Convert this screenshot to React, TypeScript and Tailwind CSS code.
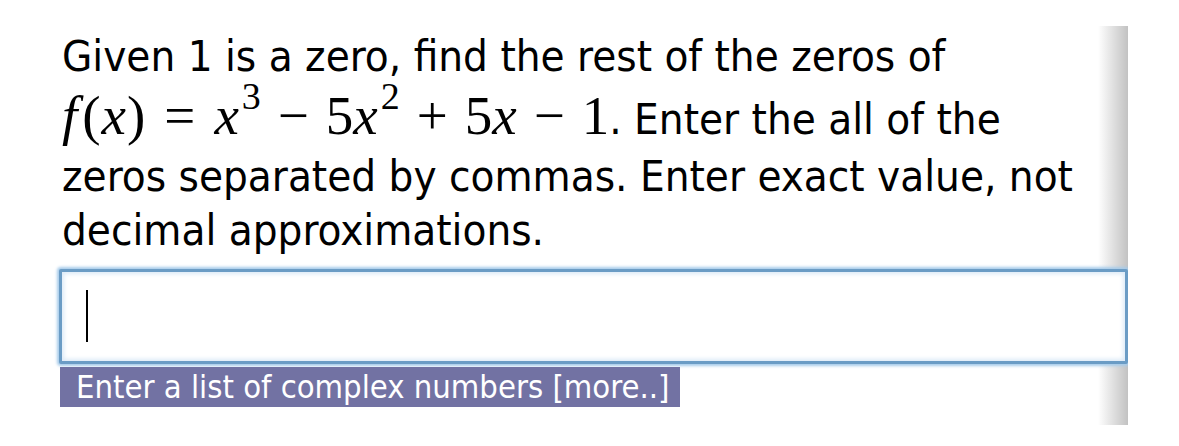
const textFont = "font-['DejaVu_Sans_Condensed','DejaVu_Sans',sans-serif]";
const mathFont = "font-['Liberation_Serif','DejaVu_Serif',serif]";

function V({ children, className = '' }: { children: React.ReactNode; className?: string }) {
  return <span className={`italic ${className}`}>{children}</span>;
}

function Sup({ children }: { children: React.ReactNode }) {
  return <sup className="relative -top-[6px] ml-[3px] align-super text-[38px] leading-none">{children}</sup>;
}

// f(x) = x^3 - 5x^2 + 5x - 1, set in a TeX-like serif with thick/medium spaces
function Formula() {
  return (
    <span className={`${mathFont} inline-block whitespace-nowrap text-[55px] leading-[66px]`}>
      <V className="mr-[5px]">f</V>(<V className="mx-[1px]">x</V>)
      <span className="mx-[19px]">=</span>
      <V>x</V>
      <Sup>3</Sup>
      <span className="mx-[17px]">−</span>5<V>x</V>
      <Sup>2</Sup>
      <span className="mx-[17px]">+</span>5<V>x</V>
      <span className="mx-[17px]">−</span>1
    </span>
  );
}

export default function App() {
  return (
    <div className="h-[446px] w-[1179px] bg-white">
      <div className="relative h-full w-[1128px] overflow-hidden">
        {/* scrolling panel edge shadow */}
        <div className="absolute right-0 top-[26px] h-[399px] w-[30px] bg-gradient-to-r from-white to-[#c2c2c2]" />

        <div className="relative pl-[62px] pt-[29px]">
          <p className={`${textFont} w-[1030px] text-[43.5px] leading-[54px] text-black`}>
            Given 1 is a zero, find the rest of the zeros of <Formula />. Enter the all of the zeros
            separated by commas. Enter exact value, not decimal approximations.
          </p>

          <div className="mt-[12px] flex flex-col">
            <div className="-ml-[3px] h-[95px] rounded-[2px] border-[3px] border-[#6b9cc5] bg-white shadow-[0_0_3px_2px_#a6cbea,inset_0_0_4px_2px_#dceaf7]">
              <div className="ml-[24px] mt-[18px] h-[52px] w-[2px] bg-black" />
            </div>
            <div
              className={`${textFont} -ml-[2px] mt-[3px] w-[620px] bg-[#7272a3] pl-[16px] text-[32.5px] leading-[40px] text-white`}
            >
              Enter a list of complex numbers [more..]
            </div>
          </div>
        </div>
      </div>
    </div>
  );
}
